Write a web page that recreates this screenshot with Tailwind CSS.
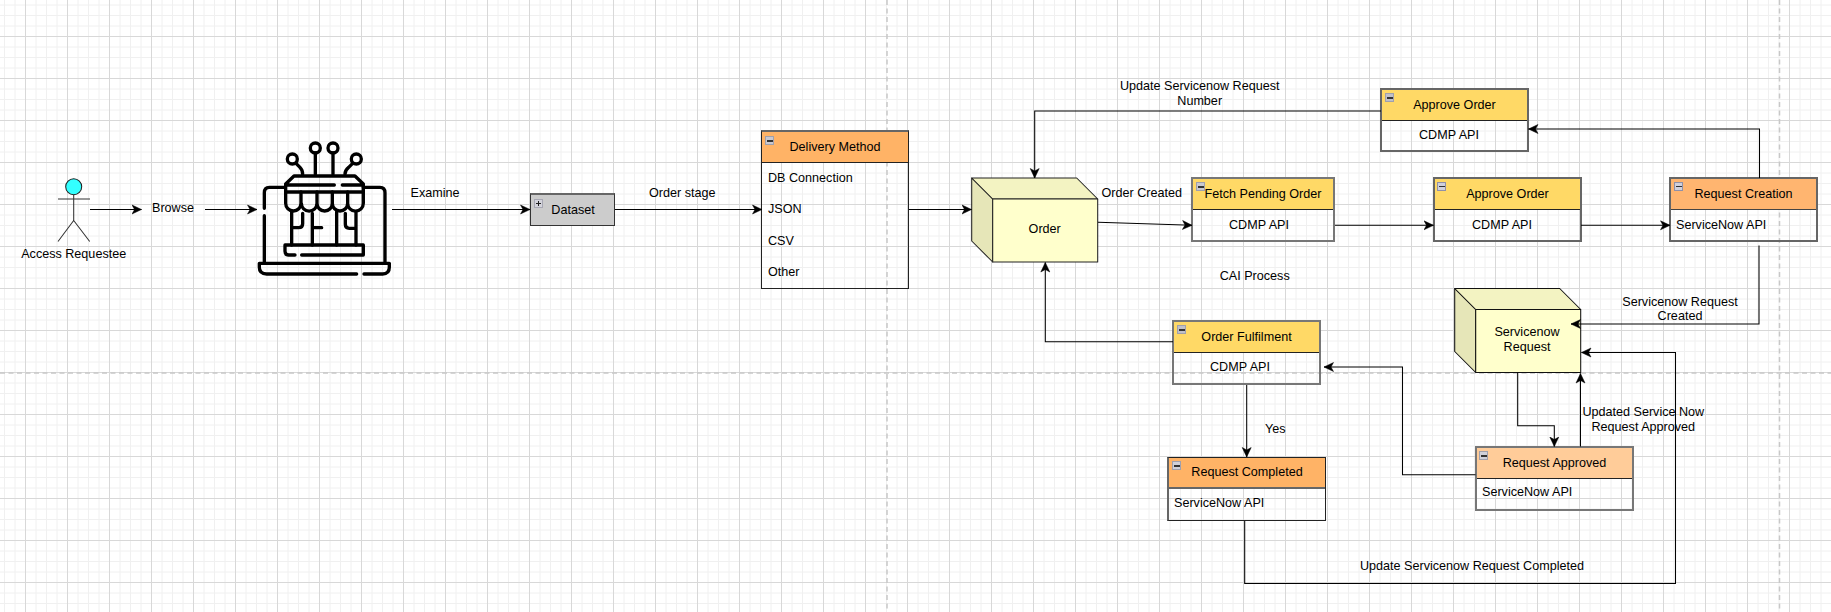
<!DOCTYPE html>
<html lang="en">
<head>
    <meta charset="UTF-8">
    <title>Data access order flow</title>
    <script src="https://cdn.jsdelivr.net/npm/@tailwindcss/browser@4"></script>
</head>
<body class="bg-white">
<div class="relative w-[1831px] h-[612px] overflow-hidden bg-white text-black font-['Liberation_Sans',Arial,sans-serif] text-[12.6px] leading-[15px]">

    <!-- grid + page breaks -->
    <svg class="absolute inset-0" width="1831" height="612">
        <defs>
            <pattern id="grid" width="42" height="42" x="25" y="36" patternUnits="userSpaceOnUse">
                <path d="M11 0V42M21.500 0V42M32 0V42M0 11H42M0 21.500H42M0 32H42" fill="none" stroke="#f0f0f0" stroke-width="1"/>
                <path d="M.5 0V42M0 .5H42" fill="none" stroke="#d8d8d8" stroke-width="1"/>
            </pattern>
        </defs>
        <rect width="1831" height="612" fill="url(#grid)"/>
        <path d="M887 0V612M1779.500 0V612M0 373H1831" fill="none" stroke="#c8c8c8" stroke-width="1.500" stroke-dasharray="5 3.500"/>
    </svg>

    <!-- Dataset -->
    <div class="absolute left-[530px] top-[193px] w-[85px] h-[33px] bg-[#cccccc] border border-t-2 border-[#333] border-t-[#666] flex items-center justify-center text-center">
        <span class="pl-[1px]">Dataset</span>
        <div class="absolute left-[3px] top-[4px] w-[9px] h-[9px] bg-[#d4d4dc] border border-[#a8a8b4] flex items-center justify-center">
            <div class="relative w-[5px] h-[1px] bg-[#222]"><div class="absolute left-[2px] top-[-2px] w-[1px] h-[5px] bg-[#222]"></div></div>
        </div>
    </div>

    <!-- Delivery Method -->
    <div class="absolute left-[761px] top-[130px] w-[148px] h-[159px] flex flex-col border-t-2 border-t-[#666] border-x border-b border-[#222]">
        <div class="relative h-[31px] shrink-0 bg-[#ffb366] border-b border-[#222] flex items-center justify-center">
            Delivery Method
            <div class="absolute left-[3px] top-[4px] w-[9px] h-[9px] bg-[#c8c8d0] border border-[#a0a0ac] flex items-center justify-center"><div class="w-[6px] h-[2px] bg-[#333]"></div></div>
        </div>
        <div class="h-[31.5px] flex items-center pl-[6px]">DB Connection</div>
        <div class="h-[31.5px] flex items-center pl-[6px]">JSON</div>
        <div class="h-[31.5px] flex items-center pl-[6px]">CSV</div>
        <div class="h-[31.5px] flex items-center pl-[6px]">Other</div>
    </div>

    <!-- Approve Order (top) -->
    <div class="absolute left-[1380px] top-[88px] w-[149px] h-[64px] flex flex-col border-2 border-[#666]">
        <div class="relative h-[31px] shrink-0 bg-[#ffd966] border-b border-[#222] flex items-center justify-center">
            Approve Order
            <div class="absolute left-[3px] top-[3px] w-[9px] h-[9px] bg-[#c0c0c8] border border-[#a0a0ac] flex items-center justify-center"><div class="w-[6px] h-[2px] bg-[#333]"></div></div>
        </div>
        <div class="flex-1 flex items-center justify-center pr-[11px]">CDMP API</div>
    </div>

    <!-- Fetch Pending Order -->
    <div class="absolute left-[1191px] top-[177px] w-[144px] h-[65px] flex flex-col border-2 border-[#777]">
        <div class="relative h-[31px] shrink-0 bg-[#ffd966] border-b border-[#222] flex items-center justify-center">
            Fetch Pending Order
            <div class="absolute left-[3px] top-[3px] w-[9px] h-[9px] bg-[#c8c8d0] border border-[#a0a0ac] flex items-center justify-center"><div class="w-[6px] h-[2px] bg-[#333]"></div></div>
        </div>
        <div class="flex-1 flex items-center justify-center pr-[8px]">CDMP API</div>
    </div>

    <!-- Approve Order (middle) -->
    <div class="absolute left-[1433px] top-[177px] w-[149px] h-[65px] flex flex-col border-2 border-[#666]">
        <div class="relative h-[31px] shrink-0 bg-[#ffd966] border-b border-[#222] flex items-center justify-center">
            Approve Order
            <div class="absolute left-[2px] top-[3px] w-[9px] h-[9px] bg-[#d0d0dc] border border-[#9090a8] flex items-center justify-center"><div class="w-[6px] h-[1px] bg-[#333]"></div></div>
        </div>
        <div class="flex-1 flex items-center justify-center pr-[11px]">CDMP API</div>
    </div>

    <!-- Request Creation -->
    <div class="absolute left-[1669px] top-[177px] w-[149px] h-[65px] flex flex-col border-2 border-[#666]">
        <div class="relative h-[31px] shrink-0 bg-[#ffb570] border-b border-[#444] flex items-center justify-center">
            Request Creation
            <div class="absolute left-[3px] top-[3px] w-[9px] h-[9px] bg-[#d0d0dc] border border-[#9090a8] flex items-center justify-center"><div class="w-[6px] h-[1px] bg-[#333]"></div></div>
        </div>
        <div class="flex-1 flex items-center pl-[5px]">ServiceNow API</div>
    </div>

    <!-- Order Fulfilment -->
    <div class="absolute left-[1172px] top-[320px] w-[149px] h-[65px] flex flex-col border-2 border-[#777]">
        <div class="relative h-[31px] shrink-0 bg-[#ffd966] border-b border-[#222] flex items-center justify-center">
            Order Fulfilment
            <div class="absolute left-[3px] top-[3px] w-[9px] h-[9px] bg-[#c0c0c8] border border-[#a0a0ac] flex items-center justify-center"><div class="w-[6px] h-[2px] bg-[#333]"></div></div>
        </div>
        <div class="flex-1 flex items-center justify-center pr-[13px] pb-[2px]">CDMP API</div>
    </div>

    <!-- Request Completed -->
    <div class="absolute left-[1167px] top-[457px] w-[159px] h-[64px] flex flex-col border-l-2 border-l-[#666] border-t border-r border-b border-[#222]">
        <div class="relative h-[31px] shrink-0 bg-[#ffb366] border-b-2 border-[#666] flex items-center justify-center">
            Request Completed
            <div class="absolute left-[3px] top-[3px] w-[9px] h-[9px] bg-[#d0d0d8] border border-[#a0a0ac] flex items-center justify-center"><div class="w-[6px] h-[2px] bg-[#333]"></div></div>
        </div>
        <div class="flex-1 flex items-center pl-[5px] pb-[3px]">ServiceNow API</div>
    </div>

    <!-- Request Approved -->
    <div class="absolute left-[1475px] top-[446px] w-[159px] h-[65px] flex flex-col border-2 border-[#777]">
        <div class="relative h-[31px] shrink-0 bg-[#ffcc99] border-b border-[#222] flex items-center justify-center">
            Request Approved
            <div class="absolute left-[2px] top-[3px] w-[9px] h-[9px] bg-[#d0d0d8] border border-[#a0a0ac] flex items-center justify-center"><div class="w-[6px] h-[2px] bg-[#333]"></div></div>
        </div>
        <div class="flex-1 flex items-center pl-[5px] pb-[4px]">ServiceNow API</div>
    </div>

    <!-- connectors, cubes, actor, storefront icon -->
    <svg class="absolute inset-0" width="1831" height="612">
        <defs>
            <marker id="arrow" markerUnits="userSpaceOnUse" markerWidth="12" markerHeight="12" refX="10" refY="6" orient="auto">
                <path d="M0.5 1.5L10 6L0.5 10.5L3 6Z" fill="#000" stroke="#000" stroke-width=".5"/>
            </marker>
        </defs>

        <!-- order cube -->
        <g stroke="#222" stroke-width="1.05" stroke-linejoin="round">
            <path d="M971.7 178L992.7 199V262L971.7 241Z" fill="#e6e6b8"/>
            <path d="M971.7 178H1076.7L1097.7 199H992.7Z" fill="#f3f3c2"/>
            <path d="M992.7 199H1097.7V262H992.7Z" fill="#ffffcc"/>
        </g>
        <!-- servicenow cube -->
        <g stroke="#111" stroke-width="1.05" stroke-linejoin="round">
            <path d="M1454.7 288.5L1475.7 309.5V372.5L1454.7 351.5Z" fill="#e6e6b8"/>
            <path d="M1454.7 288.5H1559.7L1580.7 309.5H1475.7Z" fill="#f3f3c2"/>
            <path d="M1475.7 309.5H1580.7V372.5H1475.7Z" fill="#ffffcc"/>
        </g>

        <!-- actor -->
        <g fill="none" stroke="#333" stroke-width="1.05">
            <circle cx="73.7" cy="186.7" r="8" fill="#33ffff" stroke="#222"/>
            <path d="M73.7 194.7V220.5M58 199H90M73.7 220.5L58 241.5M73.7 220.5L89.7 241.5"/>
        </g>

        <!-- storefront icon -->
        <g transform="translate(240 130) scale(.3333)" fill="none" stroke="#000" stroke-width="10" stroke-linecap="round" stroke-linejoin="round">
            <circle cx="157" cy="87" r="15"/>
            <circle cx="226" cy="54" r="15"/>
            <circle cx="279" cy="54" r="15"/>
            <circle cx="349" cy="87" r="15"/>
            <path d="M168 100L180 112Q188 120 188 133M338 100L326 112Q315 120 315 133M226 69V133M279 69V133"/>
            <path d="M137 168V162L162 138H345L370 162V168M137 165H283M307 165H370M137 186H370"/>
            <path d="M137 165V220a23 23 0 0 0 46 0V186M184 220a23.500 23.500 0 0 0 47 0V186M231 220a23 23 0 0 0 46 0V186M277 220a23 23 0 0 0 46 0V186M323 220a23.500 23.500 0 0 0 47 0V165"/>
            <path d="M133 172H88Q73 172 73 188V235M73 257V398M370 172H420Q435 172 435 188V398"/>
            <path d="M350 432H80Q58 432 58 412V400H448V412Q448 432 428 432H372"/>
            <path d="M155 245V345M155 293H176Q188 293 188 281V250M217 250V345M217 293H245M290 245V345M348 245V345M316 250V283Q316 295 328 295H348"/>
            <path d="M165 375H146Q135 375 135 364V345H370V375H185"/>
        </g>

        <!-- edges -->
        <g fill="none" stroke="#000" stroke-width="1.05">
            <path d="M90 209.500H141.500" marker-end="url(#arrow)"/>
            <path d="M205 209.500H257" marker-end="url(#arrow)"/>
            <path d="M392 209.500H530" marker-end="url(#arrow)"/>
            <path d="M615 209.500H762" marker-end="url(#arrow)"/>
            <path d="M909 209.500H971.500" marker-end="url(#arrow)"/>
            <path d="M1098 222.300L1192 225.300" marker-end="url(#arrow)"/>
            <path d="M1335 225.300H1433.500" marker-end="url(#arrow)"/>
            <path d="M1581 225.300H1670" marker-end="url(#arrow)"/>
            <path d="M1759.500 178V129H1528.500" marker-end="url(#arrow)"/>
            <path d="M1381 111H1034.700V178" marker-end="url(#arrow)"/>
            <path d="M1759 245.500V324H1571" marker-end="url(#arrow)"/>
            <path d="M1173 341.700H1045.300V262.500" marker-end="url(#arrow)"/>
            <path d="M1246.700 385V457" marker-end="url(#arrow)"/>
            <path d="M1244.700 521V583.500H1675.500V352.500H1581.500" marker-end="url(#arrow)"/>
            <path d="M1475.500 474.700H1402.500V367H1324" marker-end="url(#arrow)"/>
            <path d="M1517.700 372.500V425.700H1554.300V446.500" marker-end="url(#arrow)"/>
            <path d="M1580.500 446.500V373.500" marker-end="url(#arrow)"/>
        </g>
    </svg>

    <!-- edge labels and free text -->
    <div class="absolute left-[73.7px] top-[254px] -translate-x-1/2 -translate-y-1/2 whitespace-nowrap">Access Requestee</div>
    <div class="absolute left-[173px] top-[208px] -translate-x-1/2 -translate-y-1/2 whitespace-nowrap">Browse</div>
    <div class="absolute left-[435px] top-[192.500px] -translate-x-1/2 -translate-y-1/2 whitespace-nowrap">Examine</div>
    <div class="absolute left-[682.300px] top-[192.500px] -translate-x-1/2 -translate-y-1/2 whitespace-nowrap">Order stage</div>
    <div class="absolute left-[1044.700px] top-[229px] -translate-x-1/2 -translate-y-1/2 whitespace-nowrap">Order</div>
    <div class="absolute left-[1141.700px] top-[192.500px] -translate-x-1/2 -translate-y-1/2 whitespace-nowrap">Order Created</div>
    <div class="absolute left-[1199.700px] top-[94px] -translate-x-1/2 -translate-y-1/2 whitespace-nowrap text-center">Update Servicenow Request<br>Number</div>
    <div class="absolute left-[1254.700px] top-[276.300px] -translate-x-1/2 -translate-y-1/2 whitespace-nowrap">CAI Process</div>
    <div class="absolute left-[1527px] top-[340px] -translate-x-1/2 -translate-y-1/2 whitespace-nowrap text-center">Servicenow<br>Request</div>
    <div class="absolute left-[1680px] top-[308.500px] -translate-x-1/2 -translate-y-1/2 whitespace-nowrap text-center leading-[14px]">Servicenow Request<br>Created</div>
    <div class="absolute left-[1643.300px] top-[420px] -translate-x-1/2 -translate-y-1/2 whitespace-nowrap text-center">Updated Service Now<br>Request Approved</div>
    <div class="absolute left-[1275.300px] top-[429.300px] -translate-x-1/2 -translate-y-1/2 whitespace-nowrap">Yes</div>
    <div class="absolute left-[1472px] top-[566.300px] -translate-x-1/2 -translate-y-1/2 whitespace-nowrap">Update Servicenow Request Completed</div>
</div>
</body>
</html>
